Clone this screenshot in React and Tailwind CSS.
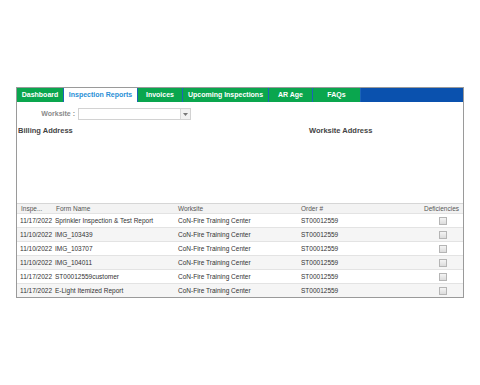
import React from "react";

const font = { fontFamily: "'Liberation Sans', Arial, sans-serif" };

const tabs = [
  { label: "Dashboard", w: "w-[47px]" },
  { label: "Inspection Reports", w: "w-[74px]", active: true },
  { label: "Invoices", w: "w-[45px]" },
  { label: "Upcoming Inspections", w: "w-[86px]" },
  { label: "AR Age", w: "w-[44px]" },
  { label: "FAQs", w: "w-[48px]" },
];

const rows = [
  ["11/17/2022", "Sprinkler Inspection & Test Report"],
  ["11/10/2022", "IMG_103439"],
  ["11/10/2022", "IMG_103707"],
  ["11/10/2022", "IMG_104011"],
  ["11/17/2022", "ST00012559customer"],
  ["11/17/2022", "E-Light Itemized Report"],
];

function Checkbox() {
  return (
    <span className="block w-[8px] h-[8px] border border-[#b5b5b5] bg-gradient-to-b from-[#f4f4f4] to-[#dcdcdc]" />
  );
}

export default function App() {
  return (
    <div className="w-[480px] h-[385px] bg-white pt-[87px] pl-[16px]" style={font}>
      <div className="w-[448px] border border-[#9a9a9a] bg-white">
        {/* tabs */}
        <div className="flex h-[14px] bg-[#0a51ae]">
          {tabs.map((t) => (
            <div
              key={t.label}
              className={`${t.w} flex items-center justify-center text-[7px] font-bold border-r border-[#1b63b8] ${
                t.active ? "bg-white text-[#2a8fd6]" : "bg-[#0aa64e] text-white"
              }`}
            >
              {t.label}
            </div>
          ))}
        </div>

        {/* worksite select */}
        <div className="flex items-center h-[22px] pl-[20px] pt-[2px]">
          <span className="text-[7px] font-bold text-[#8a8a8a] w-[38px] text-right mr-[3px]">Worksite :</span>
          <div className="flex w-[113px] h-[12px] border border-[#d2d2d2] bg-white">
            <div className="flex-1" />
            <div className="w-[10px] border-l border-[#d8d8d8] bg-[#f1f1f1] flex items-center justify-center">
              <svg width="5" height="3" viewBox="0 0 5 3">
                <path d="M0 0 L5 0 L2.5 3 Z" fill="#777" />
              </svg>
            </div>
          </div>
        </div>

        {/* addresses */}
        <div className="flex h-[79px] text-[7.5px] font-bold text-[#444]">
          <div className="w-[292px] pl-[1px] pt-[1px]">Billing Address</div>
          <div className="pt-[1px]">Worksite Address</div>
        </div>

        {/* table */}
        <div className="text-[6.5px] text-[#333]">
          <div className="flex items-center h-[10px] border-t border-[#d6d6d6] bg-[#f3f3f3] text-[#555]">
            <div className="w-[38px] pl-[4px]">Inspe...</div>
            <div className="w-[123px] pl-[1px]">Form Name</div>
            <div className="w-[123px]">Worksite</div>
            <div className="w-[123px]">Order #</div>
            <div className="flex-1 text-right pr-[4px]">Deficiencies</div>
          </div>
          {rows.map((r, i) => (
            <div
              key={i}
              className={`flex items-center h-[14px] border-t border-[#e3e3e3] ${i % 2 ? "bg-[#f5f5f5]" : "bg-white"}`}
            >
              <div className="w-[38px] pl-[3px]">{r[0]}</div>
              <div className="w-[123px]">{r[1]}</div>
              <div className="w-[123px]">CoN-Fire Training Center</div>
              <div className="w-[123px]">ST00012559</div>
              <div className="flex-1 flex justify-end pr-[16px]">
                <Checkbox />
              </div>
            </div>
          ))}
        </div>
      </div>
    </div>
  );
}
